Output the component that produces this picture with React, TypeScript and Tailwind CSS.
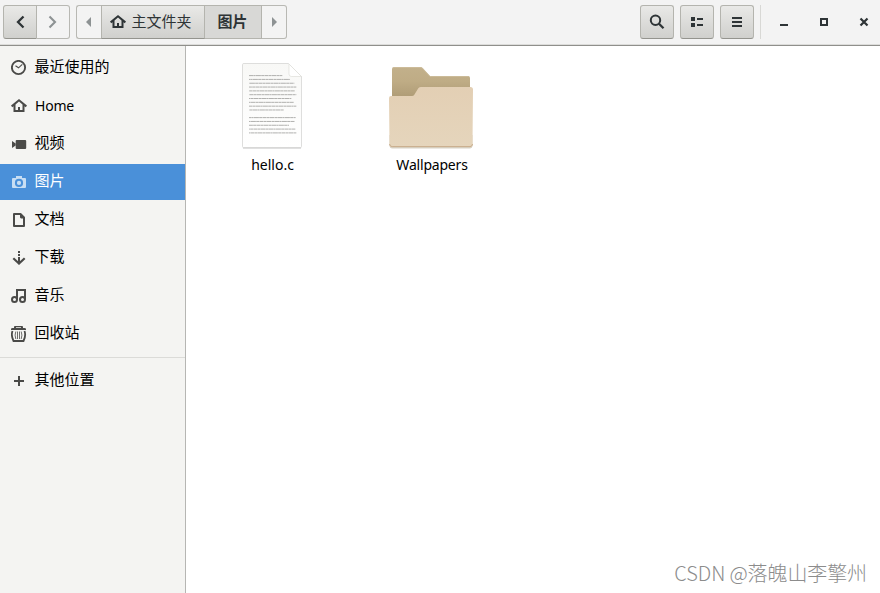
import type { ReactNode } from 'react'

const BUTTON = 'border border-[#b4b4ae] border-b-[#94948e] bg-gradient-to-b from-[#e9e9e7] to-[#d0d0cd]'

function HomeIcon() {
  return (
    <svg width="16" height="16" viewBox="0 0 16 16" fill="currentColor">
      <path d="M8 1 0 7.600 1.200 9.300 2.500 8.300V14h11V8.300l1.300 1L16 7.600zM8 3.600l3.500 2.800V12H9V9H7v3H4.500V6.400z" fillRule="evenodd" />
    </svg>
  )
}

function Icon({ children }: { children: ReactNode }) {
  return (
    <svg width="16" height="16" viewBox="0 0 16 16" fill="currentColor" className="shrink-0">
      {children}
    </svg>
  )
}

const places: { label: string; selected?: boolean; icon: ReactNode }[] = [
  {
    label: '最近使用的',
    icon: (
      <Icon>
        <circle cx="7.500" cy="7.500" r="6.600" fill="none" stroke="currentColor" strokeWidth="1.900" />
        <path d="m4.500 5.800 3 2L11.300 4.300" fill="none" stroke="currentColor" strokeWidth="1.100" />
      </Icon>
    ),
  },
  { label: 'Home', icon: <HomeIcon /> },
  {
    label: '视频',
    icon: (
      <Icon>
        <rect x="4.700" y="4" width="10.500" height="9" rx="1" />
        <path d="M1 5 4.700 7.500v2L1 12z" />
      </Icon>
    ),
  },
  {
    label: '图片',
    selected: true,
    icon: (
      <Icon>
        <path
          fillRule="evenodd"
          d="M5 2h6v2h3q1 0 1 1v8q0 1-1 1H2q-1 0-1-1V5q0-1 1-1h3zM8 4.8a4.100 4.100 0 1 0 0 8.200 4.100 4.100 0 0 0 0-8.200m0 2a2.100 2.100 0 1 1 0 4.200 2.100 2.100 0 0 1 0-4.200"
        />
      </Icon>
    ),
  },
  {
    label: '文档',
    icon: (
      <Icon>
        <path d="M3 2h6.500L13 5.500V14H3z" fill="none" stroke="currentColor" strokeWidth="2" strokeLinejoin="round" />
        <path d="M9 2v3.500l1 1h3L9.500 2z" />
      </Icon>
    ),
  },
  {
    label: '下载',
    icon: (
      <Icon>
        <path d="M7 1h2v2H7zM7 4h2v2H7zM7 7h2v5H7z" />
        <path d="m2.300 8.300 5.700 5.200 5.700-5.200" fill="none" stroke="currentColor" strokeWidth="2.200" />
      </Icon>
    ),
  },
  {
    label: '音乐',
    icon: (
      <Icon>
        <path d="M6 11.500V2h8v9.500" fill="none" stroke="currentColor" strokeWidth="2" />
        <circle cx="3.500" cy="11.500" r="2.500" fill="none" stroke="currentColor" strokeWidth="2" />
        <circle cx="11.500" cy="11.500" r="2.500" fill="none" stroke="currentColor" strokeWidth="2" />
      </Icon>
    ),
  },
  {
    label: '回收站',
    icon: (
      <Icon>
        <path d="M0 3.300Q0 2 1.500 2H3V.8Q3 0 4 0h7q1 0 1 .8V2h1.500Q15 2 15 3.300V4H0zM5 1.200V2h5v-.8z" fillRule="evenodd" />
        <path
          d="M1.500 5Q-.2 9.500 2.500 15h10q2.700-5.500 1-10"
          fill="none"
          stroke="currentColor"
          strokeWidth="1.800"
        />
        <path
          d="M4.800 5.500q-1.400 3.500 0 7.500M6.500 5.500v7.500M8.500 5.500v7.500M10.200 5.500q1.400 3.500 0 7.500"
          fill="none"
          stroke="currentColor"
          strokeWidth=".8"
        />
      </Icon>
    ),
  },
]

function Place({ label, icon, selected }: { label: string; icon: ReactNode; selected?: boolean }) {
  return (
    <div className={`flex h-9 items-center gap-2 pl-[11px] text-[15px] ${selected ? 'bg-[#4a90d9] text-white' : 'text-black'}`}>
      <span className={selected ? 'text-[#c8def3]' : 'text-[#4a4a48]'}>{icon}</span>
      <span className={label === 'Home' ? 'text-[14px] tracking-[-0.2px]' : 'pb-[3px] -ml-[0.5px]'}>{label}</span>
    </div>
  )
}

function ToolButton({ children }: { children: ReactNode }) {
  return <div className={`flex h-[34px] w-[34px] items-center justify-center rounded-[3px] ${BUTTON}`}>{children}</div>
}

const textLines = [100, 123, 136, 142, 137, 142, 127, 134, 142, 104, 0, 140, 137, 120, 139, 142]

function TextFile() {
  return (
    <svg width="64" height="90" viewBox="0 0 64 90">
      <defs>
        <linearGradient id="paper" x2="0" y2="1">
          <stop stopColor="#f8f8f6" />
          <stop offset="1" stopColor="#fff" />
        </linearGradient>
      </defs>
      <path d="M3 3.500h44l13 13v71H2v-83q0-1 1-1z" fill="#999" opacity=".6" />
      <path d="M3 2.500h44.500l13 13v70q0 1-1 1H2.500q-1 0-1-1v-82q0-1 1.500-1z" fill="url(#paper)" stroke="#d6d6d4" strokeWidth=".8" />
      <path d="M48 3 60.500 15.500H50.500Q48 15.500 48 13z" fill="#fff" stroke="#deded9" strokeWidth=".7" />
      {textLines.map((w, i) => (
        <path
          key={i}
          d={`M8 ${14.600 + i * 3.820}h${w / 3}`}
          stroke="#b0b0ae"
          strokeWidth="1"
          strokeDasharray="4 .3 2.300 .3 5 .3 3 .3"
          strokeDashoffset={i * 3}
        />
      ))}
    </svg>
  )
}

function Folder() {
  return (
    <svg width="88" height="86" viewBox="0 0 88 86">
      <defs>
        <linearGradient id="back" x2="0" y2="1">
          <stop stopColor="#c2b08b" />
          <stop offset=".4" stopColor="#bfac85" />
          <stop offset="1" stopColor="#a99671" />
        </linearGradient>
        <linearGradient id="front" x2="0" y2="1">
          <stop stopColor="#e3cfb4" />
          <stop offset="1" stopColor="#e5d5bc" />
        </linearGradient>
      </defs>
      <path d="M4 4q0-2 2-2h26q2 0 3 1.200L42 11h38q2 0 2 2v25H4z" fill="url(#back)" />
      <path d="M4.500 3.500q.5-1 1.500-1h26q1.500 0 2.500 1L42 11.500h38" fill="none" stroke="#d0c09f" strokeWidth=".7" />
      <path d="M1.500 70h83v10.500q0 3-3 3h-77q-3 0-3-3z" fill="#a99878" opacity=".45" />
      <path d="M1 33q0-2 2-2h21q1.500 0 2.300-1.300l4-6.500Q31.500 22 33 22h49.500q2.500 0 2.500 2.500L84.500 79.500q0 2.500-2.500 2.500H4q-2.500 0-2.500-2.500z" fill="url(#front)" />
      <path d="M1.600 79q.2 2.600 2.500 2.600h77.900q2.300 0 2.500-2.600" fill="none" stroke="#c8ad8c" />
    </svg>
  )
}

export default function App() {
  return (
    <div className="flex h-[593px] w-[880px] flex-col overflow-hidden bg-white font-['Noto_Sans','Noto_Sans_CJK_SC',sans-serif] leading-none">
      <header className="flex h-[46px] shrink-0 items-start border-b border-[#8f8f8b] bg-[#f3f3f3] pl-[3px] pr-2 pt-[5px] text-[#2e3436] shadow-[inset_0_-1px_0_#dcdcda]">
        <div className="flex">
          <div className={`flex h-[34px] w-[34px] items-center justify-center rounded-l-[3px] ${BUTTON}`}>
            <Icon><path d="M11.500 2.500 6 8l5.500 5.500" fill="none" stroke="currentColor" strokeWidth="2.300" /></Icon>
          </div>
          <div className="flex h-[34px] w-[33px] items-center justify-center rounded-r-[3px] border border-l-0 border-[#b8b8b3] text-[#8d9293]">
            <Icon><path d="M4.500 2.500 10 8l-5.500 5.500" fill="none" stroke="currentColor" strokeWidth="2.100" /></Icon>
          </div>
        </div>

        <div className="ml-1.5 flex h-[34px] text-[15px]">
          <div className="flex w-[25px] items-center justify-center rounded-l-[3px] border border-r-0 border-[#b8b8b3] text-[#8d9293]">
            <Icon><path d="m10 3-5 5 5 5z" /></Icon>
          </div>
          <div className={`flex w-[104px] items-center gap-1.5 pl-2 ${BUTTON}`}>
            <HomeIcon />
            <span className="-ml-[0.5px] pb-0.5">主文件夹</span>
          </div>
          <div className="flex w-[57px] items-center justify-center border-y border-r border-[#b4b4ae] bg-[#d8d8d6] pb-0.5 pr-px font-bold">图片</div>
          <div className="flex w-[25px] items-center justify-center rounded-r-[3px] border border-l-0 border-[#b8b8b3] text-[#8d9293]">
            <Icon><path d="m6 3 5 5-5 5z" /></Icon>
          </div>
        </div>

        <div className="ml-auto flex gap-1.5">
          <ToolButton>
            <Icon>
              <circle cx="6.500" cy="6.200" r="4.700" fill="none" stroke="currentColor" strokeWidth="2" />
              <path d="m10 9.700 4.500 4.500" stroke="currentColor" strokeWidth="2.300" />
            </Icon>
          </ToolButton>
          <ToolButton>
            <Icon><path d="M2 3h4v4H2zM8 4h6v2H8zM2 9h4v4H2zM8 10h6v2H8z" /></Icon>
          </ToolButton>
          <ToolButton>
            <Icon><path d="M3 3h10v2H3zM3 7h10v2H3zM3 11h10v2H3z" /></Icon>
          </ToolButton>
          <div className="w-px bg-[#d8d8d5]" />
        </div>

        <div className="-mr-2 ml-[15px] mt-[9px] flex gap-6 pr-2">
          <Icon><path d="M4 10h8v2H4z" /></Icon>
          <Icon><path fillRule="evenodd" d="M4 4h8v8H4zm2 2v4h4V6z" /></Icon>
          <Icon><path d="m4.500 4.500 7 7m0-7-7 7" stroke="currentColor" strokeWidth="2.200" /></Icon>
        </div>
      </header>

      <div className="flex min-h-0 flex-1">
        <aside className="w-[186px] shrink-0 border-r border-[#b6b6b3] bg-[#f4f4f2] pt-1">
          <nav className="flex flex-col gap-0.5">
            {places.map((place) => (
              <Place key={place.label} {...place} />
            ))}
          </nav>
          <div className="mb-[5px] mt-[5px] h-px bg-[#dbdbd8]" />
          <Place label="其他位置" icon={<Icon><path d="M7 3h2v4h4v2H9v4H7V9H3V7h4z" /></Icon>} />
        </aside>

        <main className="flex flex-1 flex-col justify-between text-[14px] text-black">
          <div className="flex pl-[7px] pt-[15px]">
            <div className="flex w-[159px] flex-col items-center">
              <TextFile />
              <span className="mt-[7px]">hello.c</span>
            </div>
            <div className="flex w-[159px] flex-col items-center pt-1">
              <Folder />
              <span className="mt-[7px] pl-px tracking-[-0.2px]">Wallpapers</span>
            </div>
          </div>
          <div className="self-end whitespace-nowrap pb-[10px] pr-[13px] font-['Noto_Sans_CJK_SC',sans-serif] text-[20px] font-light tracking-[-0.1px] text-[#8c8c8c]">
            CSDN @落魄山李擎州
          </div>
        </main>
      </div>
    </div>
  )
}
